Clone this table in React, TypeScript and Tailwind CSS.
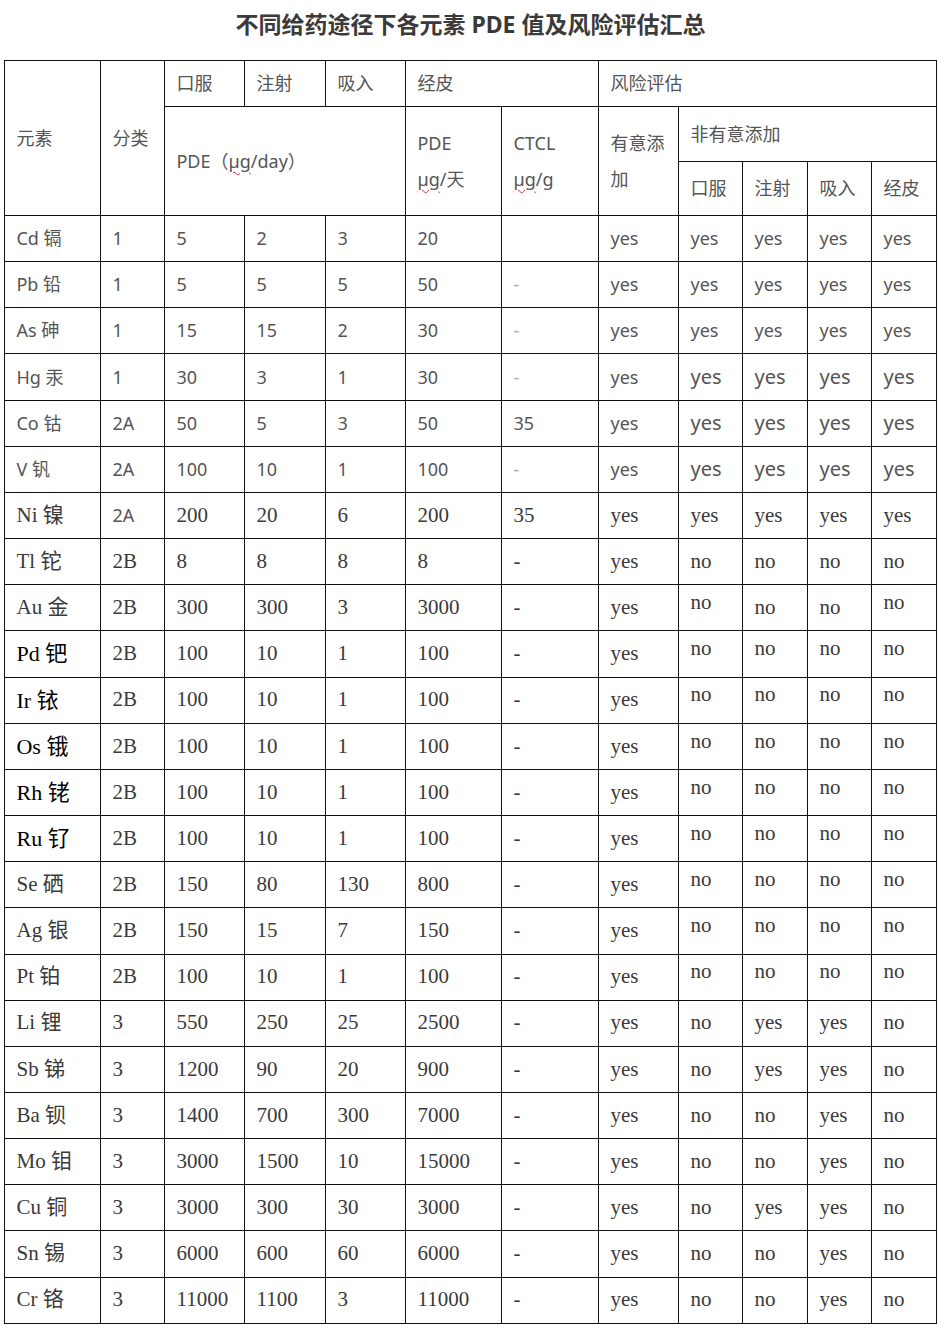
import React from 'react';

type Kind = 'sans' | 'serif';

interface Row {
  el: string;
  cls: string;
  oral: string;
  inj: string;
  inh: string;
  derm: string;
  ctcl: string;
  risk: string[]; // 有意添加 + 4 x 非有意添加
  kind: Kind;
  boldName?: boolean;
  bigYes?: boolean;
  raised?: number[]; // which of the 4 non-intentional cells sit a little higher
}

const Y = ['yes', 'yes', 'yes', 'yes', 'yes'];
const N = ['yes', 'no', 'no', 'no', 'no'];

const rows: Row[] = [
  { el: 'Cd 镉', cls: '1', oral: '5', inj: '2', inh: '3', derm: '20', ctcl: '', risk: Y, kind: 'sans' },
  { el: 'Pb 铅', cls: '1', oral: '5', inj: '5', inh: '5', derm: '50', ctcl: '-', risk: Y, kind: 'sans' },
  { el: 'As 砷', cls: '1', oral: '15', inj: '15', inh: '2', derm: '30', ctcl: '-', risk: Y, kind: 'sans' },
  { el: 'Hg 汞', cls: '1', oral: '30', inj: '3', inh: '1', derm: '30', ctcl: '-', risk: Y, kind: 'sans', bigYes: true },
  { el: 'Co 钴', cls: '2A', oral: '50', inj: '5', inh: '3', derm: '50', ctcl: '35', risk: Y, kind: 'sans', bigYes: true },
  { el: 'V 钒', cls: '2A', oral: '100', inj: '10', inh: '1', derm: '100', ctcl: '-', risk: Y, kind: 'sans', bigYes: true },
  { el: 'Ni 镍', cls: '2A', oral: '200', inj: '20', inh: '6', derm: '200', ctcl: '35', risk: Y, kind: 'serif' },
  { el: 'Tl 铊', cls: '2B', oral: '8', inj: '8', inh: '8', derm: '8', ctcl: '-', risk: N, kind: 'serif' },
  { el: 'Au 金', cls: '2B', oral: '300', inj: '300', inh: '3', derm: '3000', ctcl: '-', risk: N, kind: 'serif', raised: [0, 3] },
  { el: 'Pd 钯', cls: '2B', oral: '100', inj: '10', inh: '1', derm: '100', ctcl: '-', risk: N, kind: 'serif', boldName: true, raised: [0, 1, 2, 3] },
  { el: 'Ir 铱', cls: '2B', oral: '100', inj: '10', inh: '1', derm: '100', ctcl: '-', risk: N, kind: 'serif', boldName: true, raised: [0, 1, 2, 3] },
  { el: 'Os 锇', cls: '2B', oral: '100', inj: '10', inh: '1', derm: '100', ctcl: '-', risk: N, kind: 'serif', boldName: true, raised: [0, 1, 2, 3] },
  { el: 'Rh 铑', cls: '2B', oral: '100', inj: '10', inh: '1', derm: '100', ctcl: '-', risk: N, kind: 'serif', boldName: true, raised: [0, 1, 2, 3] },
  { el: 'Ru 钌', cls: '2B', oral: '100', inj: '10', inh: '1', derm: '100', ctcl: '-', risk: N, kind: 'serif', boldName: true, raised: [0, 1, 2, 3] },
  { el: 'Se 硒', cls: '2B', oral: '150', inj: '80', inh: '130', derm: '800', ctcl: '-', risk: N, kind: 'serif', raised: [0, 1, 2, 3] },
  { el: 'Ag 银', cls: '2B', oral: '150', inj: '15', inh: '7', derm: '150', ctcl: '-', risk: N, kind: 'serif', raised: [0, 1, 2, 3] },
  { el: 'Pt 铂', cls: '2B', oral: '100', inj: '10', inh: '1', derm: '100', ctcl: '-', risk: N, kind: 'serif', raised: [0, 1, 2, 3] },
  { el: 'Li 锂', cls: '3', oral: '550', inj: '250', inh: '25', derm: '2500', ctcl: '-', risk: ['yes', 'no', 'yes', 'yes', 'no'], kind: 'serif' },
  { el: 'Sb 锑', cls: '3', oral: '1200', inj: '90', inh: '20', derm: '900', ctcl: '-', risk: ['yes', 'no', 'yes', 'yes', 'no'], kind: 'serif' },
  { el: 'Ba 钡', cls: '3', oral: '1400', inj: '700', inh: '300', derm: '7000', ctcl: '-', risk: ['yes', 'no', 'no', 'yes', 'no'], kind: 'serif' },
  { el: 'Mo 钼', cls: '3', oral: '3000', inj: '1500', inh: '10', derm: '15000', ctcl: '-', risk: ['yes', 'no', 'no', 'yes', 'no'], kind: 'serif' },
  { el: 'Cu 铜', cls: '3', oral: '3000', inj: '300', inh: '30', derm: '3000', ctcl: '-', risk: ['yes', 'no', 'yes', 'yes', 'no'], kind: 'serif' },
  { el: 'Sn 锡', cls: '3', oral: '6000', inj: '600', inh: '60', derm: '6000', ctcl: '-', risk: ['yes', 'no', 'no', 'yes', 'no'], kind: 'serif' },
  { el: 'Cr 铬', cls: '3', oral: '11000', inj: '1100', inh: '3', derm: '11000', ctcl: '-', risk: ['yes', 'no', 'no', 'yes', 'no'], kind: 'serif' },
];

const SANS = "font-['Noto_Sans','Noto_Sans_CJK_SC',sans-serif] text-[18px] text-[#555]";
const SERIF = "font-['Liberation_Serif','Noto_Sans_CJK_SC',serif] text-[21px] text-[#3a3a3a]";

const cell = 'border border-[#111] pl-[11px] pr-0 align-middle text-left font-normal whitespace-nowrap';

const Wavy: React.FC<{ children: React.ReactNode }> = ({ children }) => (
  <span className="underline decoration-wavy decoration-[#e03030] decoration-1 underline-offset-[3px]">{children}</span>
);

const DataRow: React.FC<{ r: Row }> = ({ r }) => {
  const base = r.kind === 'sans' ? SANS : SERIF;
  const dash = r.kind === 'sans' ? 'text-[#aaa]' : '';
  return (
    <tr className="h-[46.17px]">
      <td className={`${cell} ${base} ${r.boldName ? 'text-black text-[22px]' : ''}`}>{r.el}</td>
      <td className={`${cell} ${r.el.startsWith('Ni') ? SANS : base}`}>{r.cls}</td>
      <td className={`${cell} ${base}`}>{r.oral}</td>
      <td className={`${cell} ${base}`}>{r.inj}</td>
      <td className={`${cell} ${base}`}>{r.inh}</td>
      <td className={`${cell} ${base}`}>{r.derm}</td>
      <td className={`${cell} ${base} ${r.ctcl === '-' ? dash : ''}`}>{r.ctcl}</td>
      <td className={`${cell} ${base}`}>{r.risk[0]}</td>
      {r.risk.slice(1).map((v, i) => (
        <td
          key={i}
          className={`${cell} ${base} ${r.bigYes ? 'text-[20px] text-[#333]' : ''}`}
        >
          <span className={r.raised?.includes(i) ? 'inline-block mb-[10px]' : ''}>{v}</span>
        </td>
      ))}
    </tr>
  );
};

export default function App() {
  return (
    <div className="w-[941px] min-h-[1334px] bg-white">
      <div className="h-[48px] mb-[12px] flex items-center justify-center font-['Noto_Sans','Noto_Sans_CJK_SC',sans-serif] font-bold text-[23px] text-[#3a3a3a]">
        不同给药途径下各元素 PDE 值及风险评估汇总
      </div>
      <table className="mx-auto w-[931px] table-fixed border-collapse">
        <colgroup>
          <col className="w-[96px]" />
          <col className="w-[64px]" />
          <col className="w-[80px]" />
          <col className="w-[81px]" />
          <col className="w-[80px]" />
          <col className="w-[96px]" />
          <col className="w-[97px]" />
          <col className="w-[80px]" />
          <col className="w-[64px]" />
          <col className="w-[65px]" />
          <col className="w-[64px]" />
          <col className="w-[64px]" />
        </colgroup>
        <thead className={SANS}>
          <tr className="h-[46px]">
            <th rowSpan={3} className={cell}>元素</th>
            <th rowSpan={3} className={cell}>分类</th>
            <th className={cell}>口服</th>
            <th className={cell}>注射</th>
            <th className={cell}>吸入</th>
            <th colSpan={2} className={cell}>经皮</th>
            <th colSpan={5} className={cell}>风险评估</th>
          </tr>
          <tr className="h-[55px]">
            <th colSpan={3} rowSpan={2} className={cell}>
              PDE（<Wavy>µg</Wavy>/day）
            </th>
            <th rowSpan={2} className={`${cell} leading-[36px]`}>
              PDE
              <br />
              <Wavy>µg</Wavy>/天
            </th>
            <th rowSpan={2} className={`${cell} leading-[36px]`}>
              CTCL
              <br />
              <Wavy>µg</Wavy>/g
            </th>
            <th rowSpan={2} className={`${cell} leading-[36px]`}>
              有意添
              <br />
              加
            </th>
            <th colSpan={4} className={cell}>非有意添加</th>
          </tr>
          <tr className="h-[54px]">
            <th className={cell}>口服</th>
            <th className={cell}>注射</th>
            <th className={cell}>吸入</th>
            <th className={cell}>经皮</th>
          </tr>
        </thead>
        <tbody>
          {rows.map((r) => (
            <DataRow key={r.el} r={r} />
          ))}
        </tbody>
      </table>
    </div>
  );
}
